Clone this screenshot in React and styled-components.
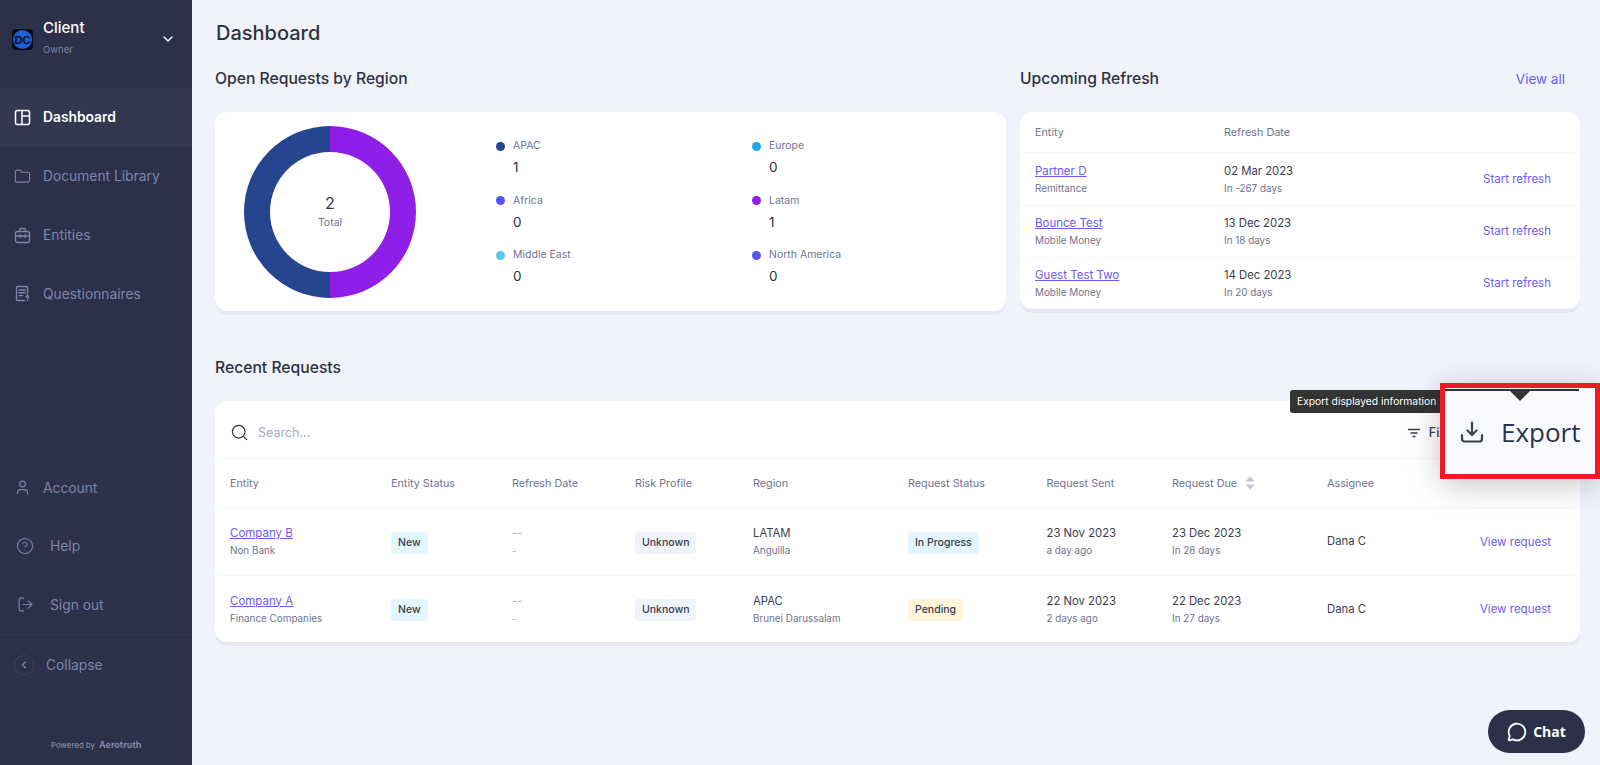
import React from 'react'
import styled, { createGlobalStyle } from 'styled-components'
import { Folder, User, CircleHelp, LogOut, ChevronLeft, ChevronDown, Search, MessageCircle } from 'lucide-react'

const GlobalStyle = createGlobalStyle`
  html, body {
    margin: 0;
    padding: 0;
    height: 100%;
    overflow: hidden;
    background: #f0f3fc;
    font-family: Inter, "Open Sans", sans-serif;
  }
`

const Page = styled.div`
  position: relative;
  display: flex;
  width: 100%;
  height: 765px;
  overflow: hidden;
  background: #f0f3fc;
  color: #2f3140;
`

const Sidebar = styled.aside`
  flex: 0 0 192px;
  display: flex;
  flex-direction: column;
  background: #2d3049;
`
const Brand = styled.div`
  height: 88px;
  box-sizing: border-box;
  padding: 16px 16px 0 12px;
  display: flex;
  align-items: flex-start;
  color: #fff;
`
const BrandLogo = styled.div`
  margin-top: 13px;
  display: flex;
`
const BrandText = styled.div`
  margin-left: 10px;
  flex: 1;
`
const BrandName = styled.div`
  font-size: 15px;
  font-weight: 500;
  line-height: 24px;
`
const BrandRole = styled.div`
  font-size: 9.5px;
  line-height: 14px;
  margin-top: 3px;
  color: #7e84a3;
`
const BrandChevron = styled.div`
  margin-top: 15px;
  display: flex;
`
const NavItem = styled.div`
  height: ${p => p.$h || 58.7}px;
  box-sizing: border-box;
  padding-bottom: ${p => (p.$active ? 1 : 0)}px;
  display: flex;
  align-items: center;
  padding-left: ${p => p.$pad || 14}px;
  font-size: 13.8px;
  font-weight: ${p => (p.$active ? 600 : 400)};
  color: ${p => (p.$active ? '#fff' : '#7f84a8')};
  background: ${p => (p.$active ? '#343750' : 'transparent')};
  svg { flex: none; }
`
const NavLabel = styled.span`
  margin-left: ${p => p.$gap || 12}px;
`
const Spacer = styled.div`
  flex: 1;
`
const Divider = styled.div`
  border-top: 1px solid #33364f;
`
const CollapseCircle = styled.span`
  width: 18px;
  height: 18px;
  border-radius: 50%;
  border: 1px solid #3c3f5a;
  display: flex;
  align-items: center;
  justify-content: center;
`
const Powered = styled.div`
  padding: 45px 0 14px 51px;
  font-size: 7.8px;
  line-height: 12px;
  font-weight: 500;
  color: #8388a8;
  b {
    font-size: 9px;
    font-weight: 700;
    margin-left: 2px;
  }
`

const Main = styled.main`
  flex: 1;
  min-width: 0;
  padding: 21px 20px 0 23px;
`
const PageTitle = styled.h1`
  margin: 0 0 23px 1px;
  font-size: 20px;
  line-height: 24px;
  font-weight: 500;
`
const TopGrid = styled.div`
  display: grid;
  grid-template-columns: 791px 1fr;
  column-gap: 14px;
`
const SectionHead = styled.div`
  display: flex;
  justify-content: space-between;
  align-items: center;
  height: 22px;
  margin-bottom: 22px;
`
const SectionTitle = styled.h2`
  margin: 0;
  font-size: 15.7px;
  line-height: 22px;
  font-weight: 500;
`
const ViewAll = styled.a`
  font-size: 13.5px;
  color: #6b5cf6;
  margin-right: 15px;
`
const Card = styled.section`
  background: #fff;
  border-radius: 12px;
  box-shadow: 0 4px 0 #e7e7f6;
`
const RegionCard = styled(Card)`
  height: 199px;
  box-sizing: border-box;
  display: flex;
  padding: 14px 0 0 29px;
`
const Donut = styled.div`
  width: 172px;
  height: 172px;
  border-radius: 50%;
  background: conic-gradient(#8f1fe8 0 50%, #26458f 50% 100%);
  display: flex;
  align-items: center;
  justify-content: center;
`
const DonutHole = styled.div`
  width: 120px;
  height: 120px;
  border-radius: 50%;
  background: #fff;
  display: flex;
  flex-direction: column;
  align-items: center;
  justify-content: center;
`
const DonutValue = styled.div`
  font-size: 16px;
  line-height: 20px;
`
const DonutLabel = styled.div`
  font-size: 10.5px;
  line-height: 16px;
  margin-top: 2px;
  color: #6f7491;
`
const Legend = styled.div`
  margin: 11px 0 0 79.5px;
  display: grid;
  grid-template-columns: 256px 200px;
  grid-auto-rows: 54.5px;
`
const LegendLabel = styled.div`
  display: flex;
  align-items: center;
  font-size: 10.5px;
  line-height: 18px;
  color: #6f7491;
`
const Dot = styled.span`
  width: 9px;
  height: 9px;
  border-radius: 50%;
  margin-right: 8.5px;
  background: ${p => p.$color};
`
const LegendValue = styled.div`
  margin: 2px 0 0 17.5px;
  font-size: 13.5px;
  line-height: 20px;
`

const RefreshCard = styled(Card)`
  height: 197px;
`
const RefreshRow = styled.div`
  display: grid;
  grid-template-columns: 189px 1fr auto;
  align-items: center;
  height: ${p => p.$h}px;
  box-sizing: border-box;
  padding: 0 29px 0 15px;
  border-bottom: ${p => (p.$last ? 'none' : '1px solid #f6f7fb')};
`
const HeadCell = styled.div`
  font-size: 10.8px;
  color: #6f7491;
  display: flex;
  align-items: center;
`
const Name = styled.a`
  display: block;
  font-size: 11.5px;
  line-height: 17px;
  color: #6b5cf6;
  text-decoration: underline;
`
const Main2 = styled.div`
  font-size: 11.3px;
  line-height: 17px;
  color: #3b3d4e;
`
const Sub = styled.div`
  font-size: 9.9px;
  line-height: 15px;
  margin-top: 1px;
  color: #6f7491;
`
const Dash = styled.div`
  font-size: ${p => p.$size}px;
  line-height: ${p => (p.$size > 10 ? 17 : 15)}px;
  margin-top: ${p => (p.$size > 10 ? 0 : 1)}px;
  color: #a5a8bd;
`
const ActionLink = styled.a`
  font-size: 11.5px;
  color: #6b5cf6;
`

const RecentHead = styled(SectionHead)`
  margin: 46px 0 22px;
`
const SearchBar = styled.div`
  height: 58px;
  box-sizing: border-box;
  padding: 6px 121px 0 15px;
  display: flex;
  align-items: center;
  border-bottom: 1px solid #f6f7fb;
`
const SearchText = styled.span`
  margin-left: 9px;
  flex: 1;
  font-size: 12.5px;
  color: #a5a8bd;
`
const FilterButton = styled.div`
  display: flex;
  align-items: center;
  gap: 7px;
  font-size: 12.5px;
  font-weight: 500;
  color: #3b3d4e;
`
const TableRow = styled.div`
  display: grid;
  grid-template-columns: 161px 121px 123px 118px 155px 138.5px 125.5px 155px 1fr auto;
  align-items: center;
  height: ${p => p.$h}px;
  box-sizing: border-box;
  padding: 0 29px 0 15px;
  border-bottom: ${p => (p.$last ? 'none' : '1px solid #f6f7fb')};
`
const Badge = styled.span`
  display: inline-block;
  height: 22px;
  line-height: 22px;
  padding: 0 7px;
  border-radius: 4px;
  font-size: 10.5px;
  font-weight: 500;
  color: #3b3d4e;
  background: ${p => p.$bg};
`
const SortIcon = styled.svg`
  margin-left: 8px;
`

const Tooltip = styled.div`
  position: absolute;
  left: 1290px;
  top: 390px;
  width: 200px;
  height: 23px;
  box-sizing: border-box;
  padding-left: 7px;
  border-radius: 3px;
  background: #333;
  color: #fff;
  font-size: 10.3px;
  line-height: 23px;
  white-space: nowrap;
`
const Callout = styled.div`
  position: absolute;
  left: 1440px;
  top: 383px;
  width: 160px;
  height: 96px;
  box-sizing: border-box;
  border: 5px solid #ed1c24;
  background: #f8f9fe;
  box-shadow: 0 6px 30px rgba(0, 0, 0, 0.22);
  display: flex;
  flex-direction: column;
`
const CalloutLine = styled.div`
  margin-top: 1px;
  width: 134px;
  height: 2px;
  background: #333;
  flex: none;
`
const CalloutArrow = styled.div`
  margin-left: 65px;
  width: 0;
  height: 0;
  flex: none;
  border-left: 10px solid transparent;
  border-right: 10px solid transparent;
  border-top: 10px solid #333;
`
const CalloutBody = styled.div`
  flex: 1;
  display: flex;
  align-items: center;
  padding: 0 0 12px 15px;
  font-family: "Open Sans", sans-serif;
  font-size: 26px;
  color: #2d3250;
`
const CalloutText = styled.span`
  margin-left: 17px;
`

const ChatButton = styled.div`
  position: absolute;
  left: 1488px;
  top: 710px;
  width: 97px;
  height: 43px;
  border-radius: 22px;
  background: #2d3049;
  color: #fff;
  display: flex;
  align-items: center;
  justify-content: center;
  gap: 6px;
  font-family: "Open Sans", sans-serif;
  font-size: 14px;
  font-weight: 700;
`

const DashboardIcon = () => (
  <svg width="17" height="17" viewBox="0 0 17 17" fill="none" stroke="#fff" strokeWidth="1.5">
    <rect x="1.5" y="1.5" width="14" height="14" rx="2" />
    <path d="M8 1.5v14M8 7h7.5" />
  </svg>
)

const BriefcaseIcon = () => (
  <svg width="17" height="17" viewBox="0 0 17 17" fill="none" stroke="#7f84a8" strokeWidth="1.4" strokeLinecap="round" strokeLinejoin="round">
    <path d="M5.5 4.5V3a1.5 1.5 0 0 1 1.5-1.5h3A1.5 1.5 0 0 1 11.5 3v1.5" />
    <rect x="1.5" y="4.5" width="14" height="11" rx="2" />
    <path d="M1.5 9h14M6 7.5V10.5M11 7.5V10.5" />
  </svg>
)

const QuestionIcon = () => (
  <svg width="17" height="17" viewBox="0 0 17 17" fill="none" stroke="#7f84a8" strokeWidth="1.4" strokeLinecap="round">
    <path d="M13.5 9V2.5a1 1 0 0 0-1-1h-9a1 1 0 0 0-1 1v12a1 1 0 0 0 1 1h7" />
    <path d="M5 5h6M5 7.8h6M5 10.6h3.5" />
    <path d="M12 12a1.3 1.3 0 1 1 1.6 1.3v.7M13.6 15.6v.1" />
  </svg>
)

const LogoMark = () => (
  <svg width="21" height="21" viewBox="0 0 21 21">
    <rect width="21" height="21" rx="4" fill="#0a0a12" />
    <circle cx="10.5" cy="10.5" r="9.5" fill="#1c5fd6" />
    <text x="10.5" y="14.5" textAnchor="middle" fontFamily="Liberation Sans" fontWeight="700" fontSize="11" fill="#0a0a12">DC</text>
  </svg>
)

const FilterIcon = () => (
  <svg width="16" height="12" viewBox="0 0 16 12" fill="none" stroke="#3b3d4e" strokeWidth="1.4">
    <path d="M2 2.5h12M4.5 6h7M6.5 9.5h3" />
  </svg>
)

const ExportIcon = () => (
  <svg width="24" height="24" viewBox="0 0 24 24" fill="none" stroke="#3a3f58" strokeWidth="2.2" strokeLinecap="round" strokeLinejoin="round">
    <path d="M12 2.5v12M7.5 10.5 12 15l4.5-4.5" />
    <path d="M2 15v4a2.5 2.5 0 0 0 2.5 2.5h15A2.5 2.5 0 0 0 22 19v-4" />
  </svg>
)

const legend = [
  ['APAC', '#26458f', 1],
  ['Europe', '#1ba8ec', 0],
  ['Africa', '#5753ee', 0],
  ['Latam', '#8f1fe8', 1],
  ['Middle East', '#5ac8e0', 0],
  ['North America', '#5753ee', 0],
]

const refreshes = [
  ['Partner D', 'Remittance', '02 Mar 2023', 'In -267 days'],
  ['Bounce Test', 'Mobile Money', '13 Dec 2023', 'In 18 days'],
  ['Guest Test Two', 'Mobile Money', '14 Dec 2023', 'In 20 days'],
]

const requests = [
  {
    name: 'Company B', type: 'Non Bank', region: 'LATAM', country: 'Anguilla',
    status: 'In Progress', statusBg: '#e3f6fd', sent: '23 Nov 2023', sentAgo: 'a day ago',
    due: '23 Dec 2023', dueIn: 'In 28 days', h: 68,
  },
  {
    name: 'Company A', type: 'Finance Companies', region: 'APAC', country: 'Brunei Darussalam',
    status: 'Pending', statusBg: '#fff5d9', sent: '22 Nov 2023', sentAgo: '2 days ago',
    due: '22 Dec 2023', dueIn: 'In 27 days', h: 66, last: true,
  },
]

const App = () => {
  return (
    <Page>
      <GlobalStyle />
      <Sidebar>
        <Brand>
          <BrandLogo><LogoMark /></BrandLogo>
          <BrandText>
            <BrandName>Client</BrandName>
            <BrandRole>Owner</BrandRole>
          </BrandText>
          <BrandChevron><ChevronDown size={16} color="#fff" /></BrandChevron>
        </Brand>
        <NavItem $active $h={59}><DashboardIcon /><NavLabel>Dashboard</NavLabel></NavItem>
        <NavItem><Folder size={17} strokeWidth={1.6} /><NavLabel>Document Library</NavLabel></NavItem>
        <NavItem><BriefcaseIcon /><NavLabel>Entities</NavLabel></NavItem>
        <NavItem><QuestionIcon /><NavLabel>Questionnaires</NavLabel></NavItem>
        <Spacer />
        <NavItem $pad={14}><User size={17} strokeWidth={1.6} /><NavLabel>Account</NavLabel></NavItem>
        <NavItem $pad={16}><CircleHelp size={18} strokeWidth={1.5} /><NavLabel $gap={16}>Help</NavLabel></NavItem>
        <NavItem $pad={17}><LogOut size={17} strokeWidth={1.6} /><NavLabel $gap={16}>Sign out</NavLabel></NavItem>
        <Divider />
        <NavItem $pad={14}>
          <CollapseCircle><ChevronLeft size={12} strokeWidth={2.2} /></CollapseCircle>
          <NavLabel>Collapse</NavLabel>
        </NavItem>
        <Powered>Powered by <b>Aerotruth</b></Powered>
      </Sidebar>

      <Main>
        <PageTitle>Dashboard</PageTitle>
        <TopGrid>
          <div>
            <SectionHead><SectionTitle>Open Requests by Region</SectionTitle></SectionHead>
            <RegionCard>
              <Donut>
                <DonutHole>
                  <DonutValue>2</DonutValue>
                  <DonutLabel>Total</DonutLabel>
                </DonutHole>
              </Donut>
              <Legend>
                {legend.map(([label, color, value]) => (
                  <div key={label}>
                    <LegendLabel><Dot $color={color} />{label}</LegendLabel>
                    <LegendValue>{value}</LegendValue>
                  </div>
                ))}
              </Legend>
            </RegionCard>
          </div>
          <div>
            <SectionHead>
              <SectionTitle>Upcoming Refresh</SectionTitle>
              <ViewAll>View all</ViewAll>
            </SectionHead>
            <RefreshCard>
              <RefreshRow $h={41}>
                <HeadCell>Entity</HeadCell>
                <HeadCell>Refresh Date</HeadCell>
              </RefreshRow>
              {refreshes.map(([name, type, date, note], i) => (
                <RefreshRow key={name} $h={i === 0 ? 53 : 51.5} $last={i === 2}>
                  <div><Name>{name}</Name><Sub>{type}</Sub></div>
                  <div><Main2>{date}</Main2><Sub>{note}</Sub></div>
                  <ActionLink>Start refresh</ActionLink>
                </RefreshRow>
              ))}
            </RefreshCard>
          </div>
        </TopGrid>

        <RecentHead><SectionTitle>Recent Requests</SectionTitle></RecentHead>
        <Card>
          <SearchBar>
            <Search size={19} strokeWidth={1.5} color="#2f3140" />
            <SearchText>Search...</SearchText>
            <FilterButton><FilterIcon />Filter</FilterButton>
          </SearchBar>
          <TableRow $h={49}>
            <HeadCell>Entity</HeadCell>
            <HeadCell>Entity Status</HeadCell>
            <HeadCell>Refresh Date</HeadCell>
            <HeadCell>Risk Profile</HeadCell>
            <HeadCell>Region</HeadCell>
            <HeadCell>Request Status</HeadCell>
            <HeadCell>Request Sent</HeadCell>
            <HeadCell>
              Request Due
              <SortIcon width="10" height="14" viewBox="0 0 10 14" fill="#c3c5d2">
                <path d="M5 0.5 9.5 5.5h-9zM5 13.5.5 8.5h9z" />
              </SortIcon>
            </HeadCell>
            <HeadCell>Assignee</HeadCell>
            <div />
          </TableRow>
          {requests.map(r => (
            <TableRow key={r.name} $h={r.h} $last={r.last}>
              <div><Name>{r.name}</Name><Sub>{r.type}</Sub></div>
              <div><Badge $bg="#e3f6fd">New</Badge></div>
              <div><Dash $size={11}>--</Dash><Dash $size={9.5}>-</Dash></div>
              <div><Badge $bg="#f0f3fa">Unknown</Badge></div>
              <div><Main2>{r.region}</Main2><Sub>{r.country}</Sub></div>
              <div><Badge $bg={r.statusBg}>{r.status}</Badge></div>
              <div><Main2>{r.sent}</Main2><Sub>{r.sentAgo}</Sub></div>
              <div><Main2>{r.due}</Main2><Sub>{r.dueIn}</Sub></div>
              <Main2>Dana C</Main2>
              <ActionLink>View request</ActionLink>
            </TableRow>
          ))}
        </Card>
      </Main>

      <Tooltip>Export displayed information</Tooltip>
      <Callout>
        <CalloutLine />
        <CalloutArrow />
        <CalloutBody><ExportIcon /><CalloutText>Export</CalloutText></CalloutBody>
      </Callout>
      <ChatButton><MessageCircle size={20} strokeWidth={2.2} />Chat</ChatButton>
    </Page>
  )
}

export default App
